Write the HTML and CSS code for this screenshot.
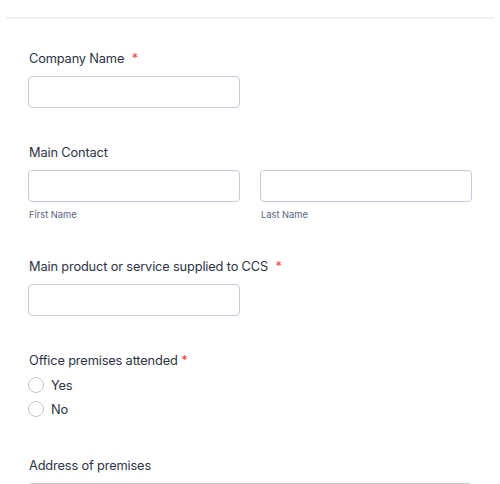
FILE: index.html
```html
<!DOCTYPE html>
<html lang="en">
<head>
  <meta charset="UTF-8" />
  <meta name="viewport" content="width=device-width, initial-scale=1.0"/>
  <title>Supplier Form</title>
  <link rel="stylesheet" href="styles.css">
</head>
<body>
<div class="top-rule"></div>

<form class="form">
  <div class="field">
    <label class="field-label" for="company">Company Name <span class="req req-gap">*</span></label>
    <input class="text-input half" type="text" id="company">
  </div>

  <div class="field">
    <label class="field-label">Main Contact</label>
    <div class="name-row">
      <div class="name-col">
        <input class="text-input" type="text" id="first-name">
        <span class="sublabel">First Name</span>
      </div>
      <div class="name-col">
        <input class="text-input" type="text" id="last-name">
        <span class="sublabel">Last Name</span>
      </div>
    </div>
  </div>

  <div class="field">
    <label class="field-label" for="product">Main product or service supplied to CCS <span class="req req-gap">*</span></label>
    <input class="text-input half" type="text" id="product">
  </div>

  <div class="field">
    <label class="field-label tight">Office premises attended <span class="req">*</span></label>
    <div class="radio-list">
      <label class="radio-row"><span class="radio"></span>Yes</label>
      <label class="radio-row"><span class="radio"></span>No</label>
    </div>
  </div>

  <div class="field">
    <label class="field-label" for="address">Address of premises</label>
    <input class="text-input" type="text" id="address">
  </div>
</form>
</body>
</html>
```

FILE: styles.css
```css
body {
  margin: 0;
  background-color: #ffffff;
  font-family: Inter, 'Noto Sans', sans-serif;
  color: #2c3345;
  overflow: hidden;
}

.top-rule {
  height: 2px;
  margin: 17px 6px 0;
  background-color: #eef0f4;
}

.form {
  display: flex;
  flex-direction: column;
  gap: 34px;
  padding: 29px 28px 0;
}

.field-label {
  display: block;
  padding-left: 1px;
  margin-bottom: 7px;
  font-size: 12.8px;
  font-weight: 400;
  letter-spacing: -0.15px;
  line-height: 21px;
}

.field-label.tight {
  margin-bottom: 2px;
}

.req {
  color: #f23a3c;
}

.req-gap {
  margin-left: 4px;
}

.text-input {
  display: block;
  width: 100%;
  height: 32px;
  padding: 0 10px;
  border: 1px solid #c7cad8;
  border-radius: 4px;
  background-color: #ffffff;
  box-sizing: border-box;
  font-family: inherit;
  font-size: 13px;
  outline: none;
}

.text-input.half {
  width: calc(50% - 10px);
}

.name-row {
  display: flex;
  gap: 20px;
}

.name-col {
  flex: 1;
}

.sublabel {
  display: block;
  margin-top: 6px;
  padding-left: 1px;
  font-size: 9.3px;
  line-height: 14px;
  color: #57647e;
}

.radio-row {
  display: flex;
  align-items: center;
  gap: 7px;
  height: 24px;
  font-size: 12.8px;
  letter-spacing: -0.15px;
}

.radio {
  width: 16px;
  height: 16px;
  border: 1px solid #c3c6d1;
  border-radius: 50%;
  box-sizing: border-box;
}
```
